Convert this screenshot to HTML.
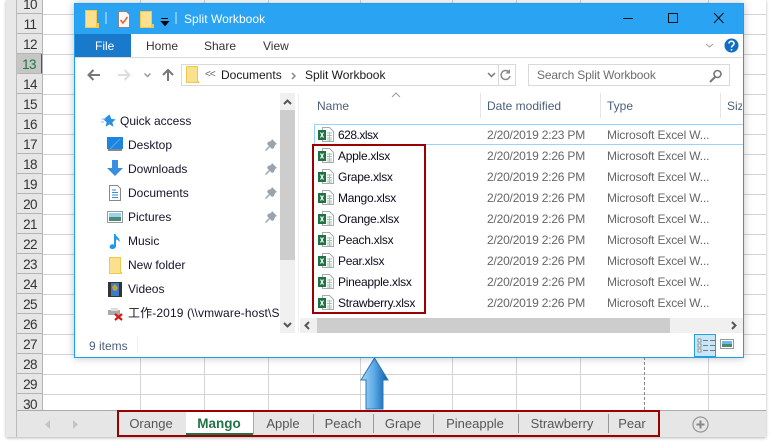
<!DOCTYPE html>
<html><head><meta charset="utf-8"><style>
html,body{margin:0;padding:0;background:#fff}
#p{position:relative;width:773px;height:445px;overflow:hidden;background:#fff;font-family:"Liberation Sans","Noto Sans CJK SC",sans-serif;font-size:12px;color:#1a1a1a}
#p div,#p svg{position:absolute}
.t{white-space:nowrap;line-height:16px;height:16px}
.r{left:17px;width:26px;height:19px;background:#e6e6e6;border-bottom:1px solid #b4b4b4;text-align:center;font-size:13.5px;line-height:22px;color:#333;letter-spacing:-.6px;overflow:hidden}
.n{left:128px;color:#14142b}
.f{left:338px;color:#0c0c1c;letter-spacing:-.27px}
.d{left:487px;color:#666;letter-spacing:-.2px}
.y{left:607px;color:#666;letter-spacing:-.15px}
.h{color:#4c607a;top:98px}
.tab{top:415px;color:#555;font-size:13px;transform:translateX(-50%);line-height:18px;height:18px;white-space:nowrap}
.sep{top:414px;width:1px;height:19px;background:#999}
</style></head><body><div id="p">
<div style="left:6px;top:0;width:760px;height:437px;background:#fff;box-shadow:0 1px 3px rgba(0,0,0,.3)"></div>
<div style="left:6px;top:0;width:11px;height:437px;background:#e8e8e8;border-right:1px solid #bbb;box-sizing:border-box"></div>
<div style="left:43px;top:0;width:723px;height:410px;background-image:repeating-linear-gradient(to bottom,transparent 0,transparent 14px,#d4d4d4 14px,#d4d4d4 15px,transparent 15px,transparent 20px)"></div>
<div style="left:140px;top:0;width:1px;height:410px;background:#d4d4d4"></div>
<div style="left:204px;top:0;width:1px;height:410px;background:#d4d4d4"></div>
<div style="left:268px;top:0;width:1px;height:410px;background:#d4d4d4"></div>
<div style="left:360px;top:0;width:1px;height:410px;background:#d4d4d4"></div>
<div style="left:452px;top:0;width:1px;height:410px;background:#d4d4d4"></div>
<div style="left:516px;top:0;width:1px;height:410px;background:#d4d4d4"></div>
<div style="left:580px;top:0;width:1px;height:410px;background:#d4d4d4"></div>
<div style="left:708px;top:0;width:1px;height:410px;background:#d4d4d4"></div>
<div style="left:644px;top:357px;width:0;height:53px;border-left:1px dashed #888"></div>

<div class="r" style="top:-6px">10</div>
<div class="r" style="top:14px">11</div>
<div class="r" style="top:34px">12</div>
<div class="r" style="top:54px;background:#c6c6c6;color:#217346;border-right:2px solid #217346;width:24px;padding-right:0">13</div>
<div class="r" style="top:74px">14</div>
<div class="r" style="top:94px">15</div>
<div class="r" style="top:114px">16</div>
<div class="r" style="top:134px">17</div>
<div class="r" style="top:154px">18</div>
<div class="r" style="top:174px">19</div>
<div class="r" style="top:194px">20</div>
<div class="r" style="top:214px">21</div>
<div class="r" style="top:234px">22</div>
<div class="r" style="top:254px">23</div>
<div class="r" style="top:274px">24</div>
<div class="r" style="top:294px">25</div>
<div class="r" style="top:314px">26</div>
<div class="r" style="top:334px">27</div>
<div class="r" style="top:354px">28</div>
<div class="r" style="top:374px">29</div>
<div class="r" style="top:394px">30</div>
<div style="left:42px;top:0;width:1px;height:410px;background:#b4b4b4"></div>

<!-- sheet tabs -->
<div style="left:17px;top:410px;width:749px;height:27px;background:#e6e6e6;border-top:1px solid #aaa;box-sizing:border-box"></div>
<svg style="left:42px;top:419px" width="40" height="11"><path d="M8 1L3 5.500L8 10z" fill="#c4c4c4"/><path d="M31 1L36 5.500L31 10z" fill="#c4c4c4"/></svg>
<div style="left:186px;top:411px;width:67px;height:22px;background:#fff;border-bottom:2px solid #217346"></div>
<div style="left:253px;top:412px;width:1px;height:22px;background:#aaa"></div>
<div style="left:117px;top:410px;width:543px;height:27px;border:2px solid #9b0000;box-sizing:border-box"></div>
<div class="tab" style="left:151px">Orange</div>
<div class="tab" style="left:219px;color:#217346;font-weight:bold;font-size:13.5px">Mango</div>
<div class="tab" style="left:283px">Apple</div>
<div class="tab" style="left:343px">Peach</div>
<div class="tab" style="left:403px">Grape</div>
<div class="tab" style="left:475px">Pineapple</div>
<div class="tab" style="left:562px">Strawberry</div>
<div class="tab" style="left:632px">Pear</div>
<div class="sep" style="left:313px"></div><div class="sep" style="left:373px"></div><div class="sep" style="left:433px"></div><div class="sep" style="left:518px"></div><div class="sep" style="left:608px"></div>
<svg style="left:692px;top:416px" width="17" height="17"><circle cx="8.500" cy="8.500" r="7.500" fill="none" stroke="#999" stroke-width="1.300"/><path d="M4.500 8.500h8M8.500 4.500v8" stroke="#888" stroke-width="2"/></svg>

<!-- arrow -->
<svg style="left:360px;top:357px" width="30" height="54"><defs><linearGradient id="ag" x1="0" x2="1" y1="0" y2="0"><stop offset="0" stop-color="#a8d8f8"/><stop offset=".5" stop-color="#5aa8e4"/><stop offset="1" stop-color="#0a58a8"/></linearGradient></defs><path d="M14.500 1L28 23H23V52H6V23H1z" fill="url(#ag)" stroke="#2a78c0" stroke-width="1"/></svg>

<!-- window -->
<div style="left:74px;top:3px;width:670px;height:355px;background:#fff;border:1px solid #1b9ff0;box-sizing:border-box;box-shadow:0 0 8px rgba(0,0,0,.25)"></div>
<div style="left:75px;top:4px;width:668px;height:30px;background:#29a3f2"></div>

<svg style="left:84px;top:9px" width="100" height="20">
<path d="M1.500 1.500h11v13h2v4h-13z" fill="#fbe08f" stroke="#f2c94c"/><path d="M12 15h3v3h-3z" fill="#f2c94c"/>
<path d="M22 3v12" stroke="#7cc5f5" stroke-width="2"/>
<path d="M34.500 2.500h8l3 3v13h-11z" fill="#f7f7f7" stroke="#888"/><path d="M36.500 11l2.500 3 4.500-6" fill="none" stroke="#e8622c" stroke-width="1.500"/>
<path d="M56.500 2.500h11v13h2v3h-13z" fill="#fbe08f" stroke="#f2c94c"/><path d="M67 15h3v3h-3z" fill="#f2c94c"/>
<path d="M77 9.500h7M77.500 12.500h7l-3.500 4z" fill="#000" stroke="#000" stroke-width="1"/>
<path d="M92 3v12" stroke="#7cc5f5" stroke-width="2"/>
</svg>
<div class="t" style="left:184px;top:11px;color:#fff;font-size:12px;letter-spacing:.05px">Split Workbook</div>
<svg style="left:620px;top:10px" width="115" height="18"><path d="M3 8.500h10" stroke="#111" stroke-width="1"/><path d="M48.500 3.500h9v9h-9z" fill="none" stroke="#111"/><path d="M94 3l9.500 10M103.500 3L94 13" stroke="#111"/></svg>

<!-- ribbon -->
<div style="left:75px;top:34px;width:56px;height:23px;background:#1979ca"></div>
<div class="t" style="left:95px;top:38px;color:#fff">File</div>
<div class="t" style="left:146px;top:38px;color:#333">Home</div>
<div class="t" style="left:204px;top:38px;color:#333">Share</div>
<div class="t" style="left:263px;top:38px;color:#333">View</div>
<div style="left:75px;top:57px;width:668px;height:1px;background:#dadada"></div>
<svg style="left:705px;top:38px" width="36" height="16"><path d="M1 6l3.500 3L8 6" fill="none" stroke="#999"/><circle cx="26.500" cy="7.500" r="7" fill="#0e6ec2"/><path d="M24 5.500c0-3 5-3 5 0 0 2-2.500 2-2.500 4M26.500 11v1.500" fill="none" stroke="#fff" stroke-width="1.600"/></svg>

<!-- nav -->
<svg style="left:86px;top:66px" width="92" height="18"><path d="M3 9h11M7.500 4L2.500 9l5 5" fill="none" stroke="#777" stroke-width="2"/><path d="M43 9H32M38.500 4L43.500 9l-5 5" fill="none" stroke="#ddd" stroke-width="2"/><path d="M58.500 7.500l3 3 3-3" fill="none" stroke="#999" stroke-width="1.500"/><path d="M82 15V4M77 9L82 4l5 5" fill="none" stroke="#777" stroke-width="2"/></svg>
<div style="left:181px;top:64px;width:335px;height:22px;border:1px solid #d9d9d9;box-sizing:border-box"></div>
<div style="left:498px;top:65px;width:1px;height:20px;background:#d9d9d9"></div>
<svg style="left:186px;top:66px" width="13" height="18"><path d="M.5 .5h11v15h1v1h-12z" fill="#fbe08f" stroke="#f2c94c"/></svg>
<div class="t" style="left:205px;top:67px;color:#666;font-size:10px;letter-spacing:-1px">&lt;&lt;</div>
<div class="t" style="left:221px;top:67px">Documents</div>
<svg style="left:290px;top:71px" width="8" height="10"><path d="M2 2l3 3-3 3" fill="none" stroke="#888" stroke-width="1.500"/></svg>
<div class="t" style="left:305px;top:67px">Split Workbook</div>
<svg style="left:486px;top:66px" width="28" height="18"><path d="M2 7l3.500 3.500L9 7" fill="none" stroke="#777" stroke-width="1.500"/><path d="M23 6a4.500 4.500 0 1 0 1 4" fill="none" stroke="#888" stroke-width="1.500"/><path d="M24 3v4.500h-4.500z" fill="#888"/></svg>
<div style="left:528px;top:64px;width:202px;height:22px;border:1px solid #d9d9d9;box-sizing:border-box"></div>
<div class="t" style="left:537px;top:67px;color:#6d6d6d;letter-spacing:-.15px">Search Split Workbook</div>
<svg style="left:709px;top:69px" width="14" height="14"><circle cx="8.500" cy="5" r="3.500" fill="none" stroke="#777" stroke-width="1.600"/><path d="M6 8l-5 5" stroke="#777" stroke-width="2"/></svg>

<!-- sidebar -->
<svg style="left:101px;top:114px" width="15" height="15"><path d="M8.500 .5l1.900 4.500 4.300.4-3.300 2.900 1 4.500-3.900-2.400-3.900 2.400 1-4.500-3.300-2.900" fill="#2a8fe0"/><path d="M.5 5h4M0 8h3" stroke="#7cc0f0"/></svg>
<div class="t" style="left:120px;top:113px;color:#14142b">Quick access</div>
<svg style="left:107px;top:137px" width="16" height="15"><path d="M0 0h16v12H0z" fill="#1b85e0"/><path d="M3 12L13 2" stroke="#58a8ee"/><path d="M1 13h14" stroke="#111" stroke-width="1"/></svg>
<div class="t n" style="top:137px">Desktop</div>
<svg style="left:107px;top:160px" width="16" height="16"><path d="M5 0h6v8h5l-8 8-8-8h5z" fill="#3a8ee0"/></svg>
<div class="t n" style="top:161px">Downloads</div>
<svg style="left:109px;top:185px" width="12" height="16"><path d="M.5.500h8l3 3v12H.5z" fill="#fff" stroke="#888"/><path d="M3 5h4M3 7.500h6M3 10h6M3 12.500h6" stroke="#3a8ed0"/></svg>
<div class="t n" style="top:185px">Documents</div>
<svg style="left:107px;top:211px" width="16" height="12"><path d="M.5.500h15v11H.5z" fill="#fff" stroke="#999"/><path d="M2 2h12v4H2z" fill="#9cd0f0"/><path d="M2 6h12v4H2z" fill="#4c8a78"/></svg>
<div class="t n" style="top:209px">Pictures</div>
<svg style="left:109px;top:233px" width="12" height="16"><path d="M5 1h1.500c.5 3 5 4 4 8-1-2-2.500-2.500-3.500-2.500V13c0 2-2 3-4 3s-3-2-2-3.500S4 11 5 11.500z" fill="#1f9af0"/></svg>
<div class="t n" style="top:233px">Music</div>
<svg style="left:109px;top:257px" width="13" height="17"><path d="M.5.500h11v15h1v1h-12z" fill="#fbe08f" stroke="#f2c94c"/></svg>
<div class="t n" style="top:257px">New folder</div>
<svg style="left:108px;top:282px" width="14" height="15"><path d="M0 0h14v15H0z" fill="#333"/><path d="M3 1h8v13H3z" fill="#3a7cc8"/><path d="M4 5l3-3 3 4-2 3-3-1z" fill="#c8a030"/></svg>
<div class="t n" style="top:281px">Videos</div>
<svg style="left:108px;top:307px" width="15" height="14"><path d="M0 3h12v5H0z" fill="#aaa"/><path d="M3 1h7v3H3z" fill="#ddd"/><path d="M7 7l7 6M14 7l-7 6" stroke="#d81818" stroke-width="2.200"/></svg>
<div class="t n" style="top:305px;width:151px;overflow:hidden;letter-spacing:.12px">工作-2019 (\\vmware-host\Shared</div>
<svg style="left:265px;top:139px" width="12" height="90"><g fill="#9aa4ac"><path d="M7 0l5 5-2 1-1 3-2 1-2-2-4 4-1-1 4-4-2-2 1-2 3-1z"/><path d="M7 24l5 5-2 1-1 3-2 1-2-2-4 4-1-1 4-4-2-2 1-2 3-1z"/><path d="M7 48l5 5-2 1-1 3-2 1-2-2-4 4-1-1 4-4-2-2 1-2 3-1z"/><path d="M7 72l5 5-2 1-1 3-2 1-2-2-4 4-1-1 4-4-2-2 1-2 3-1z"/></g></svg>

<div style="left:280px;top:93px;width:15px;height:240px;background:#f0f0f0"></div>
<div style="left:280px;top:110px;width:15px;height:150px;background:#cdcdcd"></div>
<svg style="left:280px;top:97px" width="15" height="235"><path d="M4 7l3.500-3.500L11 7" fill="none" stroke="#555" stroke-width="2"/><path d="M4 226l3.500 3.500L11 226" fill="none" stroke="#555" stroke-width="2"/></svg>
<div style="left:298px;top:93px;width:1px;height:240px;background:#f0f0f0"></div>

<!-- headers -->
<div class="t h" style="left:317px">Name</div>
<div class="t h" style="left:487px">Date modified</div>
<div class="t h" style="left:607px">Type</div>
<div class="t h" style="left:727px;width:15px;overflow:hidden">Size</div>
<div style="left:480px;top:93px;width:1px;height:25px;background:#e5e5e5"></div>
<div style="left:600px;top:93px;width:1px;height:25px;background:#e5e5e5"></div>
<div style="left:720px;top:93px;width:1px;height:25px;background:#e5e5e5"></div>
<svg style="left:391px;top:92px" width="10" height="6"><path d="M1 5l4-4 4 4" fill="none" stroke="#999"/></svg>

<!-- rows -->
<div style="left:314px;top:124px;width:429px;height:21px;border:1px solid #99d1ff;border-right:0;box-sizing:border-box"></div>
<div class="t f" style="top:127px;letter-spacing:-.5px">628.xlsx</div><div class="t d" style="top:127px">2/20/2019 2:23 PM</div><div class="t y" style="top:127px">Microsoft Excel W...</div>
<div class="t f" style="top:148px">Apple.xlsx</div><div class="t d" style="top:148px">2/20/2019 2:26 PM</div><div class="t y" style="top:148px">Microsoft Excel W...</div>
<div class="t f" style="top:169px">Grape.xlsx</div><div class="t d" style="top:169px">2/20/2019 2:26 PM</div><div class="t y" style="top:169px">Microsoft Excel W...</div>
<div class="t f" style="top:190px">Mango.xlsx</div><div class="t d" style="top:190px">2/20/2019 2:26 PM</div><div class="t y" style="top:190px">Microsoft Excel W...</div>
<div class="t f" style="top:211px">Orange.xlsx</div><div class="t d" style="top:211px">2/20/2019 2:26 PM</div><div class="t y" style="top:211px">Microsoft Excel W...</div>
<div class="t f" style="top:232px">Peach.xlsx</div><div class="t d" style="top:232px">2/20/2019 2:26 PM</div><div class="t y" style="top:232px">Microsoft Excel W...</div>
<div class="t f" style="top:253px">Pear.xlsx</div><div class="t d" style="top:253px">2/20/2019 2:26 PM</div><div class="t y" style="top:253px">Microsoft Excel W...</div>
<div class="t f" style="top:274px">Pineapple.xlsx</div><div class="t d" style="top:274px">2/20/2019 2:26 PM</div><div class="t y" style="top:274px">Microsoft Excel W...</div>
<div class="t f" style="top:295px">Strawberry.xlsx</div><div class="t d" style="top:295px">2/20/2019 2:26 PM</div><div class="t y" style="top:295px">Microsoft Excel W...</div>

<svg style="left:318px;top:127px" width="16" height="190">
<defs><g id="x"><path d="M4.500.500h7l4 4v10h-11z" fill="#fff" stroke="#aaa"/><path d="M9 6h5M9 8.500h5M9 11h5M9 13h5M11.500 5v9" stroke="#9ec8a8"/><path d="M0 3h8v10H0z" fill="#1f7244"/><path d="M2.500 5.500l3 5M5.500 5.500l-3 5" stroke="#fff" stroke-width="1.200"/></g></defs>
<use href="#x" y="0"/><use href="#x" y="21"/><use href="#x" y="42"/><use href="#x" y="63"/><use href="#x" y="84"/><use href="#x" y="105"/><use href="#x" y="126"/><use href="#x" y="147"/><use href="#x" y="168"/>
</svg>
<div style="left:312px;top:144px;width:114px;height:170px;border:2px solid #9b0000;box-sizing:border-box"></div>

<!-- h scrollbar -->
<div style="left:300px;top:318px;width:443px;height:15px;background:#f0f0f0"></div>
<div style="left:317px;top:318px;width:353px;height:15px;background:#cdcdcd"></div>
<svg style="left:303px;top:321px" width="440" height="10"><path d="M6 1L2.500 4.500 6 8" fill="none" stroke="#555" stroke-width="2"/><path d="M429 1l3.500 3.500L429 8" fill="none" stroke="#555" stroke-width="2"/></svg>

<!-- status -->
<div class="t" style="left:89px;top:338px;color:#4c607a">9 items</div>
<div style="left:137px;top:337px;width:1px;height:16px;background:#eee"></div>
<div style="left:694px;top:334px;width:22px;height:23px;background:#c7e6f7;border:1px solid #26a0da;box-sizing:border-box"></div>
<svg style="left:697px;top:338px" width="38" height="16"><path d="M1 1h3v3H1zM1 6h3v3H1zM1 11h3v3H1z" fill="#fff" stroke="#777" stroke-width=".8"/><path d="M6 2.500h5M13 2.500h5M6 7.500h5M13 7.500h5M6 12.500h5M13 12.500h5" stroke="#777"/><path d="M23.500 1.500h13v9h-13z" fill="#fff" stroke="#999"/><path d="M25 3h10v3H25z" fill="#6cb8ec"/><path d="M25 6h10v3H25z" fill="#4c8a78"/></svg>
</div></body></html>
